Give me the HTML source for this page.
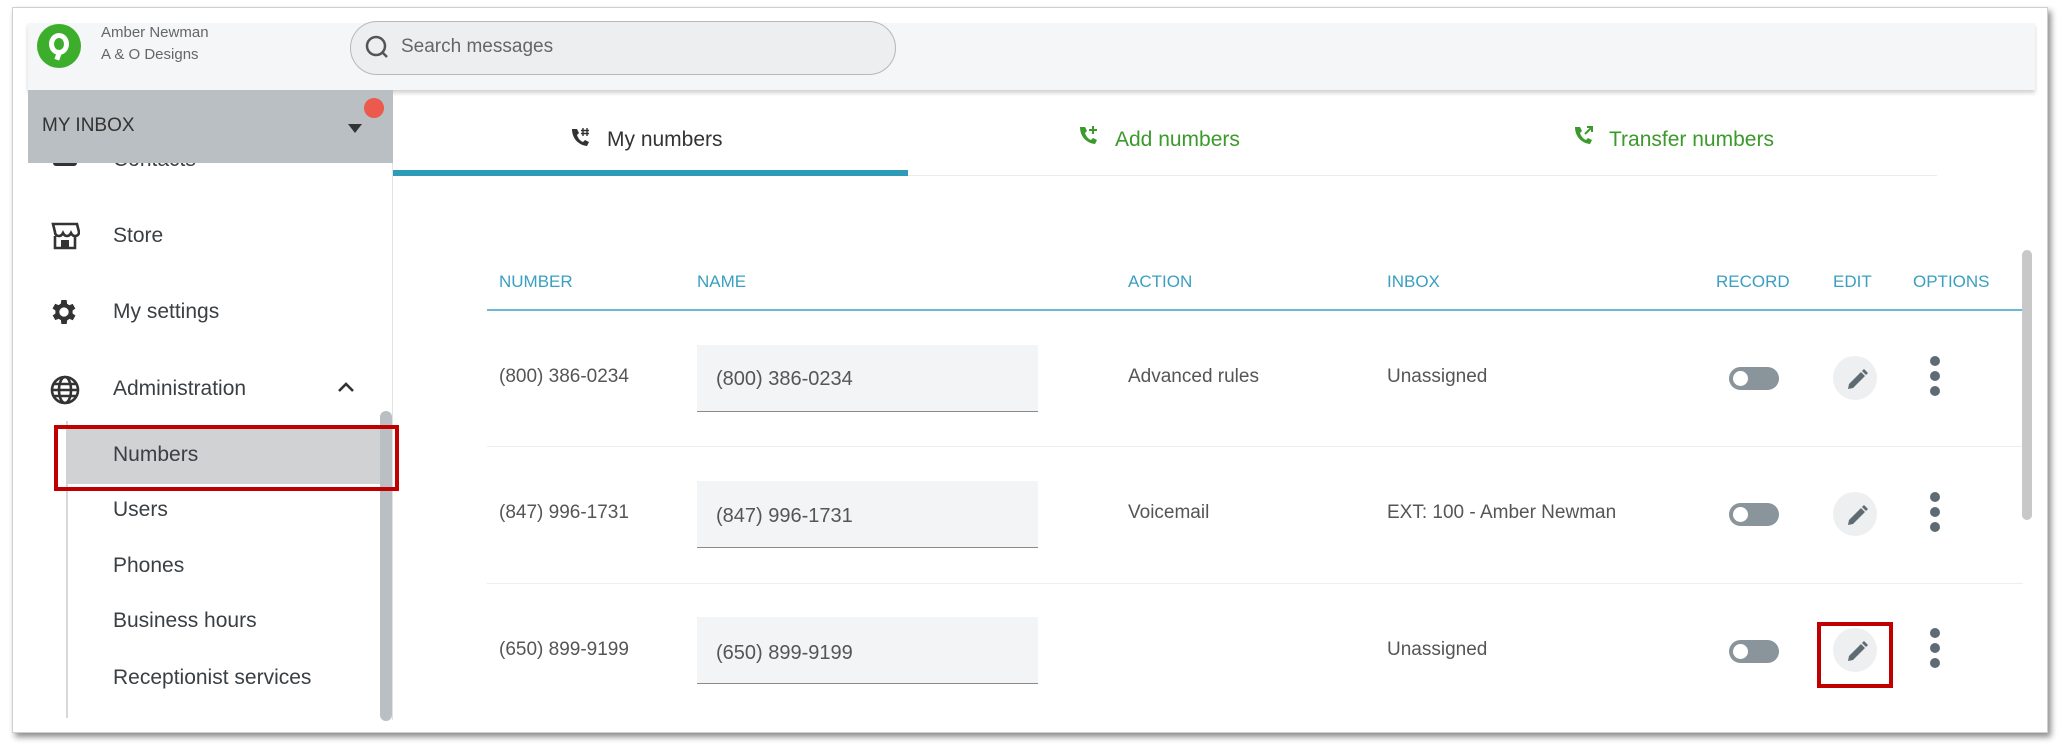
<!DOCTYPE html>
<html><head><meta charset="utf-8"><style>
*{margin:0;padding:0;box-sizing:border-box}
body{width:2064px;height:750px;background:#fff;font-family:"Liberation Sans",sans-serif;position:relative;overflow:hidden;color:#444}
.a{position:absolute}
.frame{left:12px;top:7px;width:2036px;height:726px;border:1px solid #cfcfcf;box-shadow:3px 4px 6px rgba(0,0,0,.45);background:#fff}
.t{position:absolute;white-space:nowrap}
.side{font-size:21px;color:#3a3f44}
.hd{font-size:17px;color:#3a9fc0}
.cell{font-size:19px;color:#555}
.inp{position:absolute;left:697px;width:341px;height:67px;background:#f3f4f5;border-bottom:1px solid #8a8a8a}
.tog{position:absolute;left:1729px;width:50px;height:23px;border-radius:12px;background:#8a949b}
.tog::after{content:"";position:absolute;left:4px;top:4px;width:15px;height:15px;border-radius:50%;background:#fff}
.ed{position:absolute;left:1833px;width:44px;height:44px;border-radius:50%;background:#eeeff1}
.dot{position:absolute;left:1930px;width:10px;height:10px;border-radius:50%;background:#5f6b73}
</style></head><body>
<div class="a frame"></div>
<!-- header -->
<div class="a" style="left:28px;top:23px;width:2007px;height:67px;background:#f5f6f7;box-shadow:0 3px 4px rgba(0,0,0,.18)"></div>
<div class="a" style="left:37px;top:24px;width:44px;height:44px;border-radius:50%;background:#3dae2b"></div>
<div class="a" style="left:49px;top:33px;width:20px;height:22px;border-radius:50%;border:5px solid #fff"></div>
<div class="a" style="left:56px;top:50px;width:5px;height:10px;background:#fff;transform:rotate(20deg)"></div>
<div class="t" style="left:101px;top:24px;font-size:15px;color:#666">Amber Newman</div>
<div class="t" style="left:101px;top:46px;font-size:15px;color:#666">A &amp; O Designs</div>
<div class="a" style="left:350px;top:21px;width:546px;height:54px;border-radius:27px;background:#eceef0;border:1px solid #b8b8b8"></div>
<svg class="a" style="left:363px;top:34px" width="28" height="28" viewBox="0 0 28 28"><circle cx="13" cy="12" r="9" fill="none" stroke="#555" stroke-width="2.5"/><path d="M19 18l5 5" stroke="#555" stroke-width="2.5"/></svg>
<div class="t" style="left:401px;top:36px;font-size:19px;color:#666">Search messages</div>
<!-- sidebar -->
<div class="a" style="left:392px;top:90px;width:1px;height:630px;background:#e3e3e3"></div>
<svg class="a" style="left:50px;top:140px" width="30" height="30" viewBox="0 0 30 30"><rect x="3" y="14" width="24" height="12" rx="3" fill="#333"/></svg>
<div class="t side" style="left:113px;top:148px">Contacts</div>
<div class="a" style="left:28px;top:90px;width:365px;height:73px;background:#b9bfc2"></div>
<div class="t" style="left:42px;top:115px;font-size:19px;color:#333">MY INBOX</div>
<div class="a" style="left:348px;top:124px;border-left:7px solid transparent;border-right:7px solid transparent;border-top:9px solid #333"></div>
<div class="a" style="left:364px;top:98px;width:20px;height:20px;border-radius:50%;background:#eb5a4c"></div>
<svg class="a" style="left:50px;top:222px" width="30" height="28" viewBox="0 0 30 28"><path d="M3 2h24l2 8c0 3-2 4-4 4s-3-1-4-3c-1 2-2 3-4 3s-3-1-4-3c-1 2-2 3-4 3s-4-1-4-4z M5 14v12h20V14" fill="none" stroke="#333" stroke-width="2.6"/><rect x="11" y="18" width="8" height="8" fill="#333"/></svg>
<div class="t side" style="left:113px;top:224px">Store</div>
<svg class="a" style="left:48px;top:296px" width="32" height="32" viewBox="0 0 24 24"><path fill="#333" d="M19.4 13a7.5 7.5 0 000-2l2.1-1.6-2-3.5-2.5 1a7 7 0 00-1.7-1L15 3h-4l-.4 2.8a7 7 0 00-1.7 1l-2.5-1-2 3.5L6.6 11a7.5 7.5 0 000 2l-2.1 1.6 2 3.5 2.5-1a7 7 0 001.7 1L11 21h4l.4-2.8a7 7 0 001.7-1l2.5 1 2-3.5zM13 15.5A3.5 3.5 0 1113 8.5a3.5 3.5 0 010 7z" transform="translate(-1 0)"/></svg>
<div class="t side" style="left:113px;top:300px">My settings</div>
<svg class="a" style="left:49px;top:374px" width="32" height="32" viewBox="0 0 32 32"><g fill="none" stroke="#333" stroke-width="2.6"><circle cx="16" cy="16" r="13"/><ellipse cx="16" cy="16" rx="6" ry="13"/><path d="M3 16h26M5 10h22M5 22h22"/></g></svg>
<div class="t side" style="left:113px;top:377px">Administration</div>
<svg class="a" style="left:336px;top:380px" width="20" height="14" viewBox="0 0 20 14"><path d="M3 11l7-7 7 7" fill="none" stroke="#333" stroke-width="2.6"/></svg>
<div class="a" style="left:66px;top:421px;width:2px;height:297px;background:#d8d8d8"></div>
<div class="a" style="left:66px;top:428px;width:316px;height:56px;background:#d0d2d4"></div>
<div class="a" style="left:380px;top:411px;width:12px;height:310px;border-radius:6px;background:#b9bfc2"></div>
<div class="a" style="left:54px;top:425px;width:345px;height:66px;border:4px solid #c00000"></div>
<div class="t side" style="left:113px;top:443px">Numbers</div>
<div class="t side" style="left:113px;top:498px">Users</div>
<div class="t side" style="left:113px;top:554px">Phones</div>
<div class="t side" style="left:113px;top:609px">Business hours</div>
<div class="t side" style="left:113px;top:666px">Receptionist services</div>
<!-- tabs -->
<div class="a" style="left:393px;top:175px;width:1544px;height:1px;background:#ececec"></div>
<div class="a" style="left:393px;top:170px;width:515px;height:6px;background:#2e9bb8"></div>
<svg class="a" style="left:568px;top:126px" width="24" height="24" viewBox="0 0 24 24"><path d="M4 3c0 9 6 16 15 17l2-4-4-2-2 2c-3-1-5-4-6-7l2-2-2-4z" fill="#333"/><path d="M15 2v8M19 2v8M13 4.5h8M13 7.5h8" stroke="#333" stroke-width="1.4"/></svg>
<div class="t" style="left:607px;top:128px;font-size:21px;color:#333">My numbers</div>
<svg class="a" style="left:1076px;top:124px" width="24" height="24" viewBox="0 0 24 24"><path d="M4 3c0 9 6 16 15 17l2-4-4-2-2 2c-3-1-5-4-6-7l2-2-2-4z" fill="#3a9a2a"/><path d="M17 2v8M13 6h8" stroke="#3a9a2a" stroke-width="2"/></svg>
<div class="t" style="left:1115px;top:128px;font-size:21px;color:#3a9a2a">Add numbers</div>
<svg class="a" style="left:1571px;top:124px" width="24" height="24" viewBox="0 0 24 24"><path d="M4 3c0 9 6 16 15 17l2-4-4-2-2 2c-3-1-5-4-6-7l2-2-2-4z" fill="#3a9a2a"/><path d="M14 10l7-7M16 3h5v5" fill="none" stroke="#3a9a2a" stroke-width="2"/></svg>
<div class="t" style="left:1609px;top:128px;font-size:21px;color:#3a9a2a">Transfer numbers</div>
<!-- table -->
<div class="t hd" style="left:499px;top:272px">NUMBER</div>
<div class="t hd" style="left:697px;top:272px">NAME</div>
<div class="t hd" style="left:1128px;top:272px">ACTION</div>
<div class="t hd" style="left:1387px;top:272px">INBOX</div>
<div class="t hd" style="left:1716px;top:272px">RECORD</div>
<div class="t hd" style="left:1833px;top:272px">EDIT</div>
<div class="t hd" style="left:1913px;top:272px">OPTIONS</div>
<div class="a" style="left:487px;top:309px;width:1536px;height:2px;background:#6cb8d0"></div>
<div class="a" style="left:487px;top:446px;width:1536px;height:1px;background:#eee"></div>
<div class="a" style="left:487px;top:583px;width:1536px;height:1px;background:#eee"></div>
<div class="a" style="left:2022px;top:250px;width:10px;height:270px;border-radius:5px;background:#c8c8c8"></div>

<div class="t cell" style="left:499px;top:366px">(800) 386-0234</div>
<div class="inp" style="top:345px"></div>
<div class="t cell" style="left:716px;top:368px;font-size:20px">(800) 386-0234</div>
<div class="t cell" style="left:1128px;top:366px">Advanced rules</div>
<div class="t cell" style="left:1387px;top:366px">Unassigned</div>
<div class="tog" style="top:367px"></div>
<div class="ed" style="top:356px"></div>
<div class="dot" style="top:356px"></div><div class="dot" style="top:371px"></div><div class="dot" style="top:386px"></div>

<div class="t cell" style="left:499px;top:502px">(847) 996-1731</div>
<div class="inp" style="top:481px"></div>
<div class="t cell" style="left:716px;top:505px;font-size:20px">(847) 996-1731</div>
<div class="t cell" style="left:1128px;top:502px">Voicemail</div>
<div class="t cell" style="left:1387px;top:502px">EXT: 100 - Amber Newman</div>
<div class="tog" style="top:503px"></div>
<div class="ed" style="top:492px"></div>
<div class="dot" style="top:492px"></div><div class="dot" style="top:507px"></div><div class="dot" style="top:522px"></div>

<div class="t cell" style="left:499px;top:639px">(650) 899-9199</div>
<div class="inp" style="top:617px"></div>
<div class="t cell" style="left:716px;top:642px;font-size:20px">(650) 899-9199</div>
<div class="t cell" style="left:1387px;top:639px">Unassigned</div>
<div class="tog" style="top:640px"></div>
<div class="ed" style="top:628px"></div>
<div class="dot" style="top:628px"></div><div class="dot" style="top:643px"></div><div class="dot" style="top:658px"></div>
<div class="a" style="left:1817px;top:622px;width:76px;height:66px;border:4px solid #c00000"></div>

<svg class="a" style="left:1845px;top:368px" width="24" height="24" viewBox="0 0 24 24"><path d="M3 21l1-5L16 4l4 4L8 20zM17 3l2-2 4 4-2 2z" fill="#5f6b73"/></svg>
<svg class="a" style="left:1845px;top:504px" width="24" height="24" viewBox="0 0 24 24"><path d="M3 21l1-5L16 4l4 4L8 20zM17 3l2-2 4 4-2 2z" fill="#5f6b73"/></svg>
<svg class="a" style="left:1845px;top:640px" width="24" height="24" viewBox="0 0 24 24"><path d="M3 21l1-5L16 4l4 4L8 20zM17 3l2-2 4 4-2 2z" fill="#5f6b73"/></svg>
</body></html>
